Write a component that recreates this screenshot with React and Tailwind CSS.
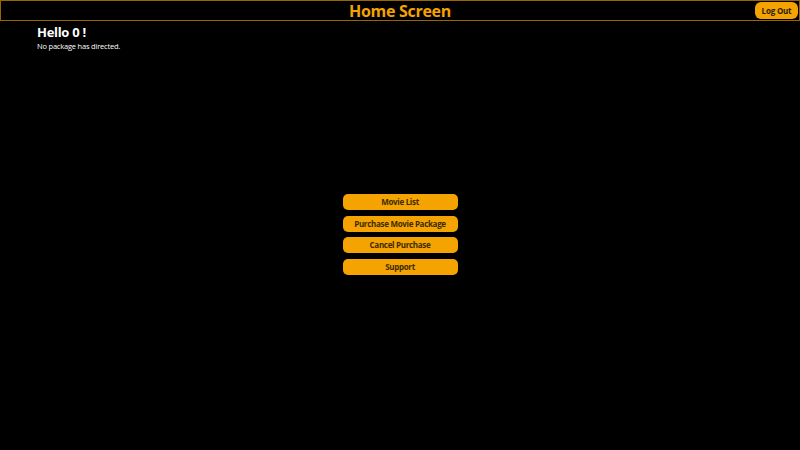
import React from 'react';

const buttons = ['Movie List', 'Purchase Movie Package', 'Cancel Purchase', 'Support'];

export default function App() {
    return (
        <div className="w-[800px] h-[450px] bg-black text-white overflow-hidden" style={{ fontFamily: '"Open Sans", "Noto Sans", sans-serif' }}>
            <header className="relative h-[21px] border border-[#9a6400] flex items-center justify-center">
                <h1 className="text-[16px] font-bold text-[#f5a300] leading-none tracking-[-0.3px]">Home Screen</h1>
                <button className="absolute right-[1px] top-[1px] h-[17px] w-[43px] rounded-[6px] bg-[#f5a300] text-[#2a1f00] text-[8px] font-bold leading-none tracking-[-0.2px]">
                    Log Out
                </button>
            </header>

            <div className="pl-[37px] pt-[4px]">
                <h2 className="text-[13px] font-bold leading-[14px] tracking-[-0.3px]">Hello 0 !</h2>
                <p className="text-[7.5px] leading-[10px] mt-[2px] tracking-[-0.2px]">No package has directed.</p>
            </div>

            <div className="flex flex-col items-center gap-[5.5px] mt-[143px]">
                {buttons.map((label) => (
                    <button key={label} className="w-[115px] h-[16px] rounded-[5px] bg-[#f5a300] text-[#3a2c00] text-[8px] font-bold leading-none tracking-[-0.3px]">
                        {label}
                    </button>
                ))}
            </div>
        </div>
    );
}
